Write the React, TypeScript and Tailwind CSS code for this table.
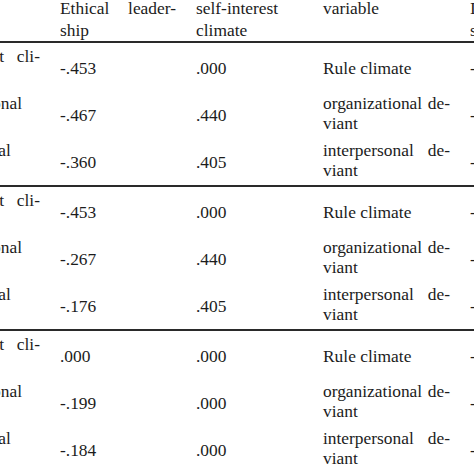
const cols = 'grid grid-cols-[141px_136px_127px_147px_120px]'

type Row = { a: string[]; b: string; c: string; d: string[]; e: string }

const groups: Row[][] = [
  [
    { a: ['Self-interest cli-', 'mate'], b: '-.453', c: '.000', d: ['Rule climate'], e: '-.453' },
    { a: ['Organizational', 'deviant'], b: '-.467', c: '.440', d: ['organizational de-', 'viant'], e: '-.205' },
    { a: ['Interpersonal', 'deviant'], b: '-.360', c: '.405', d: ['interpersonal de-', 'viant'], e: '-.183' },
  ],
  [
    { a: ['Self-interest cli-', 'mate'], b: '-.453', c: '.000', d: ['Rule climate'], e: '-.453' },
    { a: ['Organizational', 'deviant'], b: '-.267', c: '.440', d: ['organizational de-', 'viant'], e: '-.199' },
    { a: ['Interpersonal', 'deviant'], b: '-.176', c: '.405', d: ['interpersonal de-', 'viant'], e: '-.184' },
  ],
  [
    { a: ['Self-interest cli-', 'mate'], b: '.000', c: '.000', d: ['Rule climate'], e: '-.453' },
    { a: ['Organizational', 'deviant'], b: '-.199', c: '.000', d: ['organizational de-', 'viant'], e: '-.199' },
    { a: ['Interpersonal', 'deviant'], b: '-.184', c: '.000', d: ['interpersonal de-', 'viant'], e: '-.184' },
  ],
]

function Cell({ lines }: { lines: string[] }) {
  // two-line cells sit a little above the row's middle in the reference
  return (
    <div className={`px-[10px] ${lines.length > 1 ? '-mt-[3px]' : ''}`}>
      {lines.map((l, i) => (
        <div
          key={i}
          className={l.endsWith('-') && i < lines.length - 1 ? 'text-justify [text-align-last:justify]' : ''}
        >
          {l}
        </div>
      ))}
    </div>
  )
}

export default function App() {
  return (
    <div className="w-[474px] h-[474px] overflow-hidden bg-white text-[#1c1c1c] text-[17.4px] [font-family:'Liberation_Serif','Times_New_Roman',serif]">
      <div className="ml-[-91px] -mt-[3px] w-[671px]">
        {/* header */}
        <div className={`${cols} leading-[22px] border-b-2 border-[#2a2a2a]`}>
          <div />
          <div className="px-[10px]">
            <div className="text-justify [text-align-last:justify]">Ethical leader-</div>
            <div>ship</div>
          </div>
          <div className="px-[10px]">
            <div>self-interest</div>
            <div>climate</div>
          </div>
          <div className="px-[10px]">variable</div>
          <div className="px-[10px]">
            <div>Indirect</div>
            <div>size</div>
          </div>
        </div>

        {groups.map((g, gi) => (
          <div key={gi} className={`pt-[1px] leading-[20px] ${gi < groups.length - 1 ? 'border-b-2 border-[#2a2a2a]' : ''}`}>
            {g.map((r, ri) => (
              <div key={ri} className={`${cols} h-[47px] items-center`}>
                <Cell lines={r.a} />
                <Cell lines={[r.b]} />
                <Cell lines={[r.c]} />
                <Cell lines={r.d} />
                <Cell lines={[r.e]} />
              </div>
            ))}
          </div>
        ))}
      </div>
    </div>
  )
}
